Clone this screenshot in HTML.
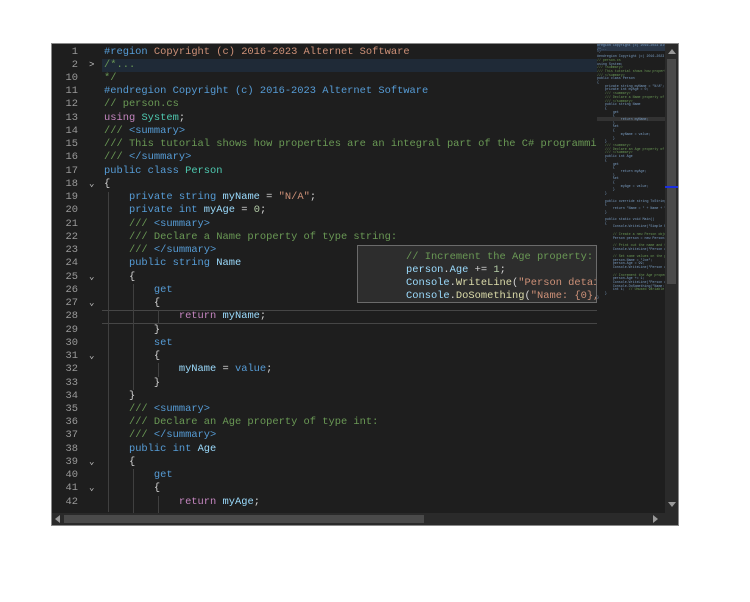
<!DOCTYPE html>
<html><head><meta charset="utf-8"><style>
body{margin:0;width:750px;height:602px;background:#fff;position:relative;overflow:hidden;font-family:"Liberation Mono",monospace;}
#ed{position:absolute;left:51px;top:43px;width:628px;height:483px;background:#1e1e1e;border:1px solid #8a8a8a;box-sizing:border-box;overflow:hidden}
#w{position:absolute;left:0;top:1.5px;width:545px;height:470px}
.r{position:absolute;left:0;height:13.24px;line-height:13.24px;font-size:10.4px;white-space:pre;width:545px}
.n{position:absolute;left:0;width:26px;text-align:right;color:#999}
.f{position:absolute;left:37px;color:#c5c5c5;font-size:9px}
.c{position:absolute;left:52px;color:#d4d4d4}
.k{color:#569cd6}.p{color:#c586c0}.t{color:#4ec9b0}.s{color:#ce9178}.g{color:#6a9955}.i{color:#9cdcfe}.o{color:#ce9178}.nm{color:#b5cea8}.y{color:#dcdcaa}
.gd{position:absolute;width:1px;background:#404040}
#mm{position:absolute;left:545px;top:0;width:68px;height:470px;background:#1e1e1e;font-size:3.3px;line-height:3.7px;white-space:pre;color:#7a9ec4;overflow:hidden}
#vs{position:absolute;left:613px;top:0;width:13px;height:470px;background:#2a2a2a}
#hs{position:absolute;left:0;top:469px;width:626px;height:12px;background:#2a2a2a}
#tip{position:absolute;left:305px;top:199px;width:240px;height:58px;background:#2d2d2d;border:1px solid #6b6b6b;font-size:10.4px;line-height:13.2px;white-space:pre;padding:5px 0 0 48px;box-sizing:border-box;overflow:hidden}
</style></head><body>
<div id="ed">
<div id="w">
<div class="r" style="top:13.24px;background:#1f2a37;left:50px;width:495px"></div>
<div style="position:absolute;left:50px;top:264px;width:495px;height:14px;border-top:1px solid #464646;border-bottom:1px solid #464646;box-sizing:border-box"></div>
<div class="gd" style="left:56px;top:146px;height:320px"></div>
<div class="gd" style="left:81px;top:238px;height:106px"></div>
<div class="gd" style="left:81px;top:423px;height:50px"></div>
<div class="gd" style="left:106px;top:264px;height:14px"></div>
<div class="gd" style="left:106px;top:317px;height:14px"></div>
<div class="gd" style="left:106px;top:450px;height:22px"></div>

<div class="r" style="top:0px"><span class="n">1</span><span class="c"><span class="k">#region</span> <span class="o">Copyright (c) 2016-2023 Alternet Software</span></span></div>
<div class="r" style="top:13.24px"><span class="n">2</span><span class="f">&gt;</span><span class="c"><span class="g">/*...</span></span></div>
<div class="r" style="top:26.48px"><span class="n">10</span><span class="c"><span class="g">*/</span></span></div>
<div class="r" style="top:39.72px"><span class="n">11</span><span class="c"><span class="k">#endregion Copyright (c) 2016-2023 Alternet Software</span></span></div>
<div class="r" style="top:52.96px"><span class="n">12</span><span class="c"><span class="g">// person.cs</span></span></div>
<div class="r" style="top:66.2px"><span class="n">13</span><span class="c"><span class="p">using</span> <span class="t">System</span>;</span></div>
<div class="r" style="top:79.44px"><span class="n">14</span><span class="c"><span class="g">/// </span><span class="k">&lt;summary&gt;</span></span></div>
<div class="r" style="top:92.68px"><span class="n">15</span><span class="c"><span class="g">/// This tutorial shows how properties are an integral part of the C# programming</span></span></div>
<div class="r" style="top:105.92px"><span class="n">16</span><span class="c"><span class="g">/// </span><span class="k">&lt;/summary&gt;</span></span></div>
<div class="r" style="top:119.16px"><span class="n">17</span><span class="c"><span class="k">public class</span> <span class="t">Person</span></span></div>
<div class="r" style="top:132.4px"><span class="n">18</span><span class="f">⌄</span><span class="c">{</span></div>
<div class="r" style="top:145.64px"><span class="n">19</span><span class="c">    <span class="k">private string</span> <span class="i">myName</span> = <span class="s">"N/A"</span>;</span></div>
<div class="r" style="top:158.88px"><span class="n">20</span><span class="c">    <span class="k">private int</span> <span class="i">myAge</span> = <span class="nm">0</span>;</span></div>
<div class="r" style="top:172.12px"><span class="n">21</span><span class="c">    <span class="g">/// </span><span class="k">&lt;summary&gt;</span></span></div>
<div class="r" style="top:185.36px"><span class="n">22</span><span class="c">    <span class="g">/// Declare a Name property of type string:</span></span></div>
<div class="r" style="top:198.6px"><span class="n">23</span><span class="c">    <span class="g">/// </span><span class="k">&lt;/summary&gt;</span></span></div>
<div class="r" style="top:211.84px"><span class="n">24</span><span class="c">    <span class="k">public string</span> <span class="i">Name</span></span></div>
<div class="r" style="top:225.08px"><span class="n">25</span><span class="f">⌄</span><span class="c">    {</span></div>
<div class="r" style="top:238.32px"><span class="n">26</span><span class="c">        <span class="k">get</span></span></div>
<div class="r" style="top:251.56px"><span class="n">27</span><span class="f">⌄</span><span class="c">        {</span></div>
<div class="r" style="top:264.8px"><span class="n">28</span><span class="c">            <span class="p">return</span> <span class="i">myName</span>;</span></div>
<div class="r" style="top:278.04px"><span class="n">29</span><span class="c">        }</span></div>
<div class="r" style="top:291.28px"><span class="n">30</span><span class="c">        <span class="k">set</span></span></div>
<div class="r" style="top:304.52px"><span class="n">31</span><span class="f">⌄</span><span class="c">        {</span></div>
<div class="r" style="top:317.76px"><span class="n">32</span><span class="c">            <span class="i">myName</span> = <span class="k">value</span>;</span></div>
<div class="r" style="top:331px"><span class="n">33</span><span class="c">        }</span></div>
<div class="r" style="top:344.24px"><span class="n">34</span><span class="c">    }</span></div>
<div class="r" style="top:357.48px"><span class="n">35</span><span class="c">    <span class="g">/// </span><span class="k">&lt;summary&gt;</span></span></div>
<div class="r" style="top:370.72px"><span class="n">36</span><span class="c">    <span class="g">/// Declare an Age property of type int:</span></span></div>
<div class="r" style="top:383.96px"><span class="n">37</span><span class="c">    <span class="g">/// </span><span class="k">&lt;/summary&gt;</span></span></div>
<div class="r" style="top:397.2px"><span class="n">38</span><span class="c">    <span class="k">public int</span> <span class="i">Age</span></span></div>
<div class="r" style="top:410.44px"><span class="n">39</span><span class="f">⌄</span><span class="c">    {</span></div>
<div class="r" style="top:423.68px"><span class="n">40</span><span class="c">        <span class="k">get</span></span></div>
<div class="r" style="top:436.92px"><span class="n">41</span><span class="f">⌄</span><span class="c">        {</span></div>
<div class="r" style="top:450.16px"><span class="n">42</span><span class="c">            <span class="p">return</span> <span class="i">myAge</span>;</span></div>

<div id="tip"><span class="g">// Increment the Age property:</span>
<span class="i">person</span><span style="color:#d4d4d4">.</span><span class="i">Age</span><span style="color:#d4d4d4"> += </span><span class="nm">1</span><span style="color:#d4d4d4">;</span>
<span class="i">Console</span><span style="color:#d4d4d4">.</span><span class="y">WriteLine</span><span style="color:#d4d4d4">(</span><span class="s">"Person details</span>
<span class="i">Console</span><span style="color:#d4d4d4">.</span><span class="y">DoSomething</span><span style="color:#d4d4d4">(</span><span class="s">"Name: {0}, A</span></div>
</div>

<div id="mm"><span style="background:#2a3646">#region Copyright (c) 2016-2023 Alte
/*...                               </span>
*/
#endregion Copyright (c) 2016-2023 A
<span class="g">// person.cs</span>
using System;
<span class="g">/// &lt;summary&gt;
/// This tutorial shows how propertie
/// &lt;/summary&gt;</span>
public class Person
{
    private string myName = "N/A";
    private int myAge = 0;
    <span class="g">/// &lt;summary&gt;
    /// Declare a Name property of t
    /// &lt;/summary&gt;</span>
    public string Name
    {
        get
        {
<span style="background:#333">            return myName;           </span>
        }
        set
        {
            myName = value;
        }
    }
    <span class="g">/// &lt;summary&gt;
    /// Declare an Age property of t
    /// &lt;/summary&gt;</span>
    public int Age
    {
        get
        {
            return myAge;
        }
        set
        {
            myAge = value;
        }
    }

    public override string ToString(
    {
        return "Name = " + Name + ",
    }

    public static void Main()
    {
        Console.WriteLine("Simple Pr

        <span class="g">// Create a new Person objec</span>
        Person person = new Person()

        <span class="g">// Print out the name and th</span>
        Console.WriteLine("Person de

        <span class="g">// Set some values on the pe</span>
        person.Name = "Joe";
        person.Age = 99;
        Console.WriteLine("Person de

        <span class="g">// Increment the Age propert</span>
        person.Age += 1;
        Console.WriteLine("Person de
        Console.DoSomething("Name: 
        int i;  <span class="g">// Unused variable</span>
    }
}</div>
<div id="vs"><div style="position:absolute;left:3px;top:5px;width:0;height:0;border-left:4px solid transparent;border-right:4px solid transparent;border-bottom:5px solid #999"></div>
<div style="position:absolute;left:2px;top:15px;width:9px;height:225px;background:#4a4a4a"></div>
<div style="position:absolute;left:0;top:142px;width:13px;height:2px;background:#1a2ee0"></div>
<div style="position:absolute;left:3px;top:458px;width:0;height:0;border-left:4px solid transparent;border-right:4px solid transparent;border-top:5px solid #999"></div></div>
<div id="hs"><div style="position:absolute;left:3px;top:2px;width:0;height:0;border-top:4px solid transparent;border-bottom:4px solid transparent;border-right:5px solid #999"></div>
<div style="position:absolute;left:12px;top:2px;width:360px;height:8px;background:#4a4a4a"></div>
<div style="position:absolute;left:601px;top:2px;width:0;height:0;border-top:4px solid transparent;border-bottom:4px solid transparent;border-left:5px solid #999"></div></div>
</div>
</body></html>
